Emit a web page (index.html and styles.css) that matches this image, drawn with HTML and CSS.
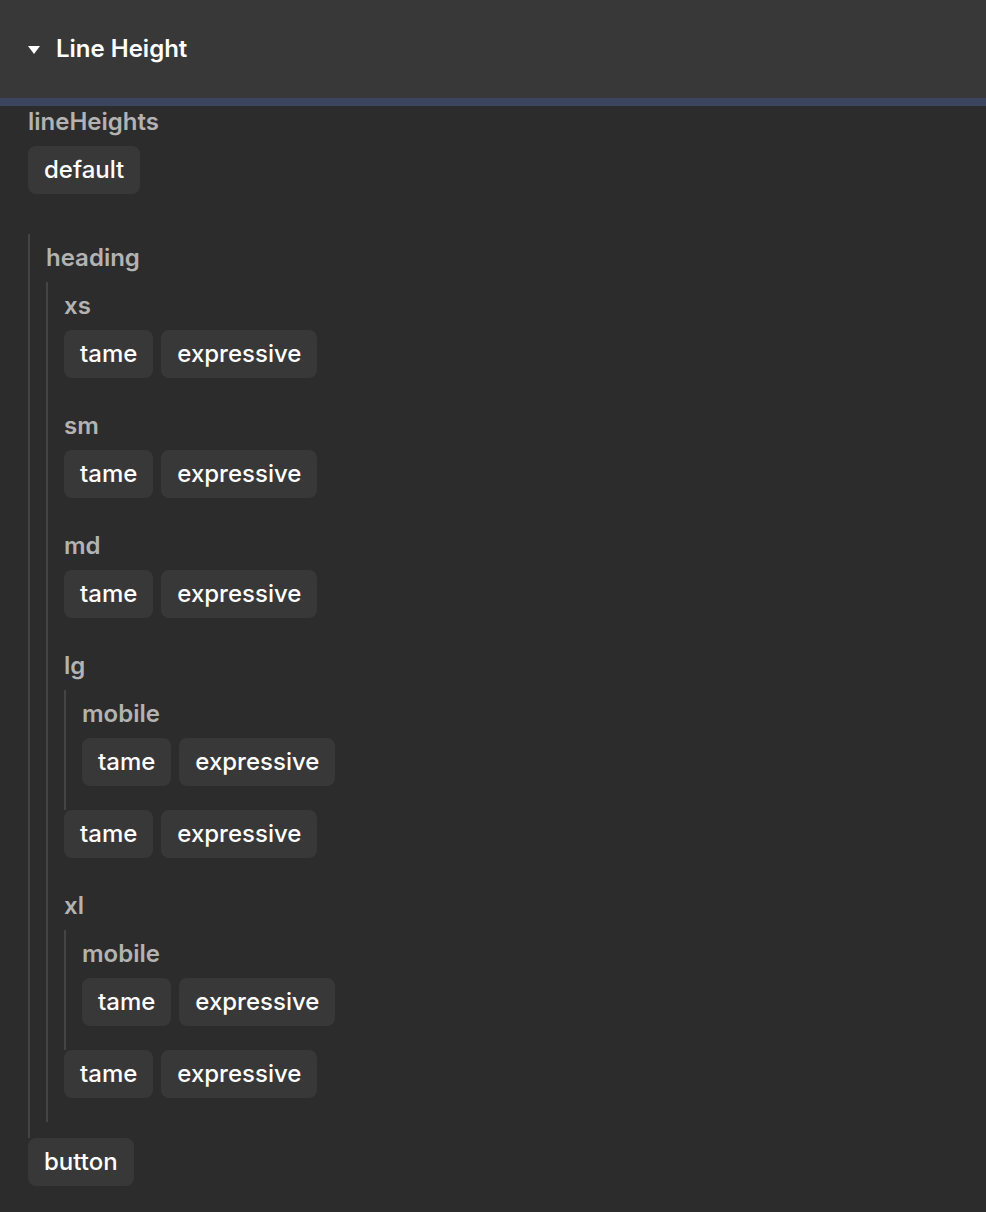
FILE: index.html
```html
<!DOCTYPE html>
<html lang="en">
<head>
    <meta charset="UTF-8">
    <meta name="viewport" content="width=device-width, initial-scale=1.0">
    <title>Line Height</title>
    <link rel="stylesheet" href="styles.css">
</head>
<body>
    <header class="panel-header">
        <span class="caret"></span>
        <h1>Line Height</h1>
    </header>
    <div class="accent-bar"></div>

    <main class="tree">
        <div class="item">
            <div class="label">lineHeights</div>
            <div class="chips">
                <span class="chip">default</span>
            </div>

            <div class="group group-spaced">
                <div class="label">heading</div>
                <div class="group">
                    <div class="item">
                        <div class="label">xs</div>
                        <div class="chips">
                            <span class="chip">tame</span>
                            <span class="chip">expressive</span>
                        </div>
                    </div>
                    <div class="item">
                        <div class="label">sm</div>
                        <div class="chips">
                            <span class="chip">tame</span>
                            <span class="chip">expressive</span>
                        </div>
                    </div>
                    <div class="item">
                        <div class="label">md</div>
                        <div class="chips">
                            <span class="chip">tame</span>
                            <span class="chip">expressive</span>
                        </div>
                    </div>
                    <div class="item">
                        <div class="label">lg</div>
                        <div class="group">
                            <div class="label">mobile</div>
                            <div class="chips">
                                <span class="chip">tame</span>
                                <span class="chip">expressive</span>
                            </div>
                        </div>
                        <div class="chips">
                            <span class="chip">tame</span>
                            <span class="chip">expressive</span>
                        </div>
                    </div>
                    <div class="item">
                        <div class="label">xl</div>
                        <div class="group">
                            <div class="label">mobile</div>
                            <div class="chips">
                                <span class="chip">tame</span>
                                <span class="chip">expressive</span>
                            </div>
                        </div>
                        <div class="chips">
                            <span class="chip">tame</span>
                            <span class="chip">expressive</span>
                        </div>
                    </div>
                </div>
            </div>

            <div class="chips">
                <span class="chip">button</span>
            </div>
        </div>
    </main>
</body>
</html>
```

FILE: styles.css
```css
* {
    margin: 0;
    padding: 0;
    box-sizing: border-box;
}

body {
    font-family: Inter, "Noto Sans", sans-serif;
    background: #2c2c2c;
    color: #fff;
    min-height: 100vh;
}

.panel-header {
    height: 98px;
    background: #383838;
    display: flex;
    align-items: center;
    padding-left: 28px;
}

.panel-header .caret {
    width: 0;
    height: 0;
    border-left: 6px solid transparent;
    border-right: 6px solid transparent;
    border-top: 8px solid #fff;
    margin-right: 16px;
    margin-top: 1px;
}

.panel-header h1 {
    font-size: 24px;
    font-weight: 600;
    line-height: 32px;
    color: #fff;
}

.accent-bar {
    height: 8px;
    background: #3c4560;
}

.tree {
    padding: 0 28px;
}

.label {
    font-size: 24px;
    font-weight: 600;
    line-height: 32px;
    color: #b3b3b3;
    margin-bottom: 8px;
}

/* a margem colapsa com a margem de baixo dos chips (8px) */
.item + .item {
    margin-top: 32px;
}

.chips {
    display: flex;
    gap: 8px;
    margin-bottom: 8px;
}

.chip {
    background: #383838;
    border-radius: 8px;
    padding: 12px 16px;
    font-size: 24px;
    font-weight: 500;
    line-height: 24px;
    color: #fff;
}

.group {
    border-left: 2px solid #444;
    padding: 8px 0 16px 16px;
}

/* espaço extra quando o grupo vem depois de chips */
.group-spaced {
    margin-top: 40px;
}
```
